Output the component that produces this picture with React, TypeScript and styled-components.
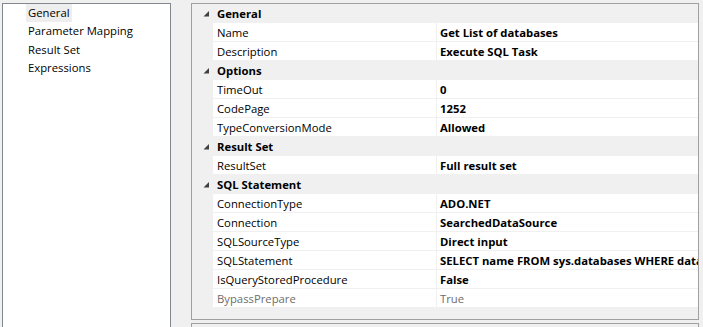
import React from "react";
import styled, { createGlobalStyle } from "styled-components";

const GlobalStyle = createGlobalStyle`
  html, body {
    margin: 0;
    padding: 0;
    background: #f0f0f0;
    overflow: hidden;
  }
  body {
    font-family: "Segoe UI", "Open Sans", "Noto Sans", sans-serif;
    font-size: 11.3px;
    color: #000;
  }
`;

const Page = styled.div`
  display: flex;
  height: 327px;
  padding: 3px 0 0 2px;
  box-sizing: border-box;
  overflow: hidden;
`;

const PageList = styled.ul`
  list-style: none;
  margin: 0;
  padding: 0 0 0 23px;
  width: 169px;
  height: 340px;
  box-sizing: border-box;
  background: #fff;
  border: 1px solid #828790;
  border-bottom: none;
  flex-shrink: 0;
`;

const PageItem = styled.li<{ selected?: boolean }>`
  display: table;
  line-height: 18.3px;
  padding: 0 2px;
  background: ${(p) => (p.selected ? "#eeeeee" : "transparent")};
`;

const RightColumn = styled.div`
  display: flex;
  flex-direction: column;
  gap: 3px;
  width: 508px;
  margin-left: 20px;
  flex-shrink: 0;
`;

const Grid = styled.div`
  height: 317px;
  flex-shrink: 0;
  box-sizing: border-box;
  border: 1px solid #a0a0a0;
  background: #f0f0f0;
  overflow: hidden;
`;

const HelpPanel = styled.div`
  height: 20px;
  flex-shrink: 0;
  border: 1px solid #a0a0a0;
  border-bottom: none;
  background: #f0f0f0;
`;

const CategoryRow = styled.div`
  display: flex;
  align-items: center;
  height: 19px;
  font-weight: bold;
`;

const Expander = styled.span`
  display: flex;
  align-items: center;
  justify-content: center;
  width: 21px;
  padding-left: 6px;
  box-sizing: border-box;
  flex-shrink: 0;
`;

const CategoryLabel = styled.span`
  padding-left: 4px;
`;

const PropertyRow = styled.div<{ disabled?: boolean }>`
  display: grid;
  grid-template-columns: 223px 261px;
  column-gap: 1px;
  height: 19px;
  margin-left: 21px;
  padding-bottom: 1px;
  box-sizing: border-box;
  color: ${(p) => (p.disabled ? "#6d6d6d" : "#000")};
`;

const Cell = styled.div`
  background: #fff;
  line-height: 19px;
  white-space: nowrap;
  overflow: hidden;
`;

const NameCell = styled(Cell)`
  padding-left: 4px;
`;

const ValueCell = styled(Cell)<{ disabled?: boolean }>`
  padding-left: 3px;
  font-weight: ${(p) => (p.disabled ? "normal" : "bold")};
`;

const Triangle = () => (
  <svg width="6" height="6" viewBox="0 0 6 6">
    <polygon points="6,0 6,5.5 0.5,5.5" fill="#404040" />
  </svg>
);

type Prop = { name: string; value: string; disabled?: boolean };
type Category = { title: string; props: Prop[] };

const categories: Category[] = [
  {
    title: "General",
    props: [
      { name: "Name", value: "Get List of databases" },
      { name: "Description", value: "Execute SQL Task" },
    ],
  },
  {
    title: "Options",
    props: [
      { name: "TimeOut", value: "0" },
      { name: "CodePage", value: "1252" },
      { name: "TypeConversionMode", value: "Allowed" },
    ],
  },
  {
    title: "Result Set",
    props: [{ name: "ResultSet", value: "Full result set" }],
  },
  {
    title: "SQL Statement",
    props: [
      { name: "ConnectionType", value: "ADO.NET" },
      { name: "Connection", value: "SearchedDataSource" },
      { name: "SQLSourceType", value: "Direct input" },
      {
        name: "SQLStatement",
        value: "SELECT name FROM sys.databases WHERE database_id > 4",
      },
      { name: "IsQueryStoredProcedure", value: "False" },
      { name: "BypassPrepare", value: "True", disabled: true },
    ],
  },
];

const pages = ["General", "Parameter Mapping", "Result Set", "Expressions"];

export default function App() {
  return (
    <>
      <GlobalStyle />
      <Page>
        <PageList>
          {pages.map((p, i) => (
            <PageItem key={p} selected={i === 0}>
              {p}
            </PageItem>
          ))}
        </PageList>
        <RightColumn>
          <Grid>
            {categories.map((c) => (
              <React.Fragment key={c.title}>
                <CategoryRow>
                  <Expander>
                    <Triangle />
                  </Expander>
                  <CategoryLabel>{c.title}</CategoryLabel>
                </CategoryRow>
                {c.props.map((p) => (
                  <PropertyRow key={p.name} disabled={p.disabled}>
                    <NameCell>{p.name}</NameCell>
                    <ValueCell disabled={p.disabled}>{p.value}</ValueCell>
                  </PropertyRow>
                ))}
              </React.Fragment>
            ))}
          </Grid>
          <HelpPanel />
        </RightColumn>
      </Page>
    </>
  );
}
